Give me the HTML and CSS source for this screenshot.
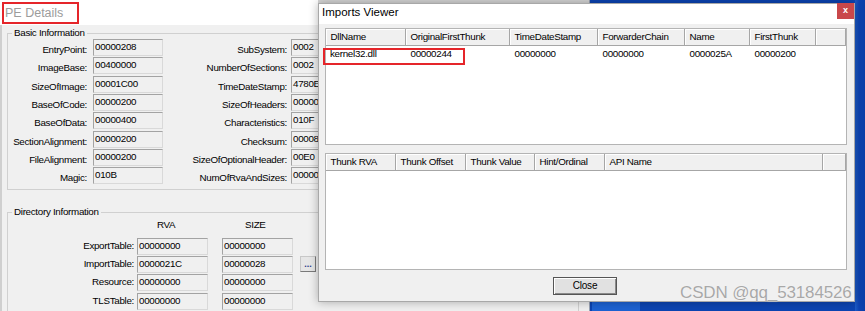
FILE: index.html
```html
<!DOCTYPE html>
<html>
<head>
<meta charset="utf-8">
<title>PE Details - Imports Viewer</title>
<link rel="stylesheet" href="styles.css">
</head>
<body>
<div class="desktop">
  <div class="pe-win">
    <div class="pe-title">PE Details</div>
    <div class="hl hl-title"></div>
    <div class="pe-body">
      <fieldset class="group basic">
        <legend>Basic Information</legend>
        <div class="kv">
          <div class="lbl">EntryPoint:</div><div class="box">00000208</div>
          <div class="lbl lbl2">SubSystem:</div><div class="box">0002</div>
          <div class="lbl">ImageBase:</div><div class="box">00400000</div>
          <div class="lbl lbl2">NumberOfSections:</div><div class="box">0002</div>
          <div class="lbl">SizeOfImage:</div><div class="box">00001C00</div>
          <div class="lbl lbl2">TimeDateStamp:</div><div class="box">4780E2C1</div>
          <div class="lbl">BaseOfCode:</div><div class="box">00000200</div>
          <div class="lbl lbl2">SizeOfHeaders:</div><div class="box">00000400</div>
          <div class="lbl">BaseOfData:</div><div class="box">00000400</div>
          <div class="lbl lbl2">Characteristics:</div><div class="box">010F</div>
          <div class="lbl">SectionAlignment:</div><div class="box">00000200</div>
          <div class="lbl lbl2">Checksum:</div><div class="box">00008A1E</div>
          <div class="lbl">FileAlignment:</div><div class="box">00000200</div>
          <div class="lbl lbl2">SizeOfOptionalHeader:</div><div class="box">00E0</div>
          <div class="lbl">Magic:</div><div class="box">010B</div>
          <div class="lbl lbl2">NumOfRvaAndSizes:</div><div class="box">00000010</div>
        </div>
      </fieldset>
      <fieldset class="group dir">
        <legend>Directory Information</legend>
        <div class="dirgrid">
          <div></div><div class="dhead">RVA</div><div class="dhead dhead2">SIZE</div><div></div>
          <div class="lbl dlbl">ExportTable:</div><div class="box dbox">00000000</div><div class="box dbox">00000000</div><div></div>
          <div class="lbl dlbl">ImportTable:</div><div class="box dbox">0000021C</div><div class="box dbox">00000028</div><div class="dots">...</div>
          <div class="lbl dlbl">Resource:</div><div class="box dbox">00000000</div><div class="box dbox">00000000</div><div></div>
          <div class="lbl dlbl">TLSTable:</div><div class="box dbox">00000000</div><div class="box dbox">00000000</div><div></div>
          <div></div><div class="box dbox"></div><div class="box dbox"></div><div></div>
        </div>
      </fieldset>
    </div>
  </div>

  <div class="imp-win">
    <div class="imp-title">
      <span class="imp-title-text">Imports Viewer</span>
      <span class="imp-close">x</span>
    </div>
    <div class="imp-body">
      <div class="lv lv-dll">
        <div class="lv-head cols-dll">
          <div class="hc">DllName</div>
          <div class="hc">OriginalFirstThunk</div>
          <div class="hc">TimeDateStamp</div>
          <div class="hc">ForwarderChain</div>
          <div class="hc">Name</div>
          <div class="hc">FirstThunk</div>
          <div class="hc"></div>
        </div>
        <div class="lv-row cols-dll">
          <div class="rc">kernel32.dll</div>
          <div class="rc">00000244</div>
          <div class="rc">00000000</div>
          <div class="rc">00000000</div>
          <div class="rc">0000025A</div>
          <div class="rc">00000200</div>
          <div class="rc"></div>
        </div>
        <div class="hl hl-row"></div>
      </div>
      <div class="lv lv-thunk">
        <div class="lv-head cols-thunk">
          <div class="hc">Thunk RVA</div>
          <div class="hc">Thunk Offset</div>
          <div class="hc">Thunk Value</div>
          <div class="hc">Hint/Ordinal</div>
          <div class="hc">API Name</div>
          <div class="hc"></div>
        </div>
      </div>
      <div class="btn-row">
        <div class="btn-close">Close</div>
      </div>
    </div>
  </div>

  <div class="watermark">CSDN @qq_53184526</div>
</div>
</body>
</html>
```

FILE: styles.css
```css
* {
  box-sizing: border-box;
}

html, body {
  margin: 0;
  padding: 0;
}

body {
  width: 865px;
  height: 311px;
  overflow: hidden;
  font-family: "Liberation Sans", Arial, sans-serif;
  color: #000;
}

.desktop {
  position: relative;
  width: 865px;
  height: 311px;
  overflow: hidden;
  background:
    linear-gradient(#1d62d2, #1d62d2) 592px 302px / 48px 9px no-repeat,
    linear-gradient(90deg, #1d5cc8 0, #0d43b2 4px, #0a3ea8 100%) 855px 0 / 10px 311px no-repeat,
    #0c44b2;
}

/* ---------- PE Details window ---------- */
.pe-win {
  position: absolute;
  left: 0;
  top: 0;
  width: 590px;
  height: 311px;
  background: #f0f0f0;
  border-right: 1px solid #9aa3b5;
}

.pe-title {
  height: 25px;
  background: linear-gradient(#d6d6d6, #d6d6d6) 318px 0 / 272px 3px no-repeat, #fff;
  display: flex;
  align-items: center;
  padding-left: 5px;
  font-size: 12.5px;
  color: #9c9c9c;
}

.pe-body {
  height: 286px;
  padding: 2px 0 0 7px;
  box-shadow: inset 2px 0 0 #cfcfcf;
}

.hl {
  position: absolute;
  border: 2px solid #e5252a;
}

.hl-title {
  left: 2px;
  top: 2px;
  width: 77px;
  height: 22px;
}

.group {
  margin: 0;
  padding: 0 0 5px 0;
  border: 1px solid #d0d0d0;
  width: 572px;
  min-width: 0;
}

.group legend {
  margin-left: 4px;
  padding: 0 2px;
  font-size: 9.8px;
  letter-spacing: -0.3px;
  line-height: 12px;
}

.dir {
  margin-top: 16px;
}

.kv {
  display: grid;
  grid-template-columns: 85px 70px 128px 70px;
  grid-auto-rows: 17px;
  row-gap: 1.33px;
}

.lbl {
  text-align: right;
  padding-right: 6px;
  font-size: 9.8px;
  letter-spacing: -0.3px;
  line-height: 21px;
  white-space: nowrap;
}

.lbl2 {
  padding-right: 4px;
}

.box {
  height: 17px;
  border: 1px solid;
  border-color: #a3a3a3 #d9d9d9 #d9d9d9 #a3a3a3;
  background: #f0f0f0;
  padding: 0 1px;
  font-size: 9.8px;
  letter-spacing: -0.3px;
  line-height: 13px;
  white-space: nowrap;
  overflow: hidden;
}

.dirgrid {
  display: grid;
  grid-template-columns: 129px 85px 78px 16px;
  grid-template-rows: 18px;
  grid-auto-rows: 17px;
  row-gap: 1.33px;
}

.dhead {
  font-size: 9.8px;
  letter-spacing: -0.3px;
  line-height: 14px;
  padding-left: 20px;
}

.dhead2 {
  padding-left: 23px;
}

.dlbl {
  padding-right: 3px;
  line-height: 16px;
}

.dbox {
  width: 71px;
}

.dots {
  width: 16px;
  height: 16px;
  margin-top: 0.5px;
  border: 1px solid;
  border-color: #c8c8c8 #7a7a7a #7a7a7a #c8c8c8;
  background: #e6e6e6;
  font-size: 9px;
  font-weight: bold;
  line-height: 14px;
  text-align: center;
  color: #2a3a8a;
  letter-spacing: 0;
}

/* ---------- Imports Viewer window ---------- */
.imp-win {
  position: absolute;
  left: 318px;
  top: 3px;
  width: 537px;
  height: 299px;
  border: 1px solid #a8a8a8;
  background: #f0f0f0;
  box-shadow: 0 0 9px rgba(0, 0, 0, 0.3);
  display: flex;
  flex-direction: column;
}

.imp-title {
  height: 20px;
  background: #fff;
  display: flex;
  justify-content: space-between;
  align-items: flex-start;
}

.imp-title-text {
  padding-left: 3px;
  font-size: 11.5px;
  line-height: 17px;
}

.imp-close {
  width: 17px;
  height: 16px;
  margin-top: -1px;
  background: #c9474a;
  color: #fff;
  font-size: 9px;
  font-weight: bold;
  line-height: 15px;
  text-align: center;
}

.imp-body {
  flex: 1;
  padding: 4px 7px 0 6px;
  display: flex;
  flex-direction: column;
}

.lv {
  position: relative;
  height: 117px;
  background: #fff;
  border: 1px solid #b4b4b4;
}

.lv-thunk {
  margin-top: 8px;
}

.lv-head,
.lv-row {
  display: grid;
}

.cols-dll {
  grid-template-columns: 80px 104px 88px 87px 65px 66px 30px;
}

.cols-thunk {
  grid-template-columns: 70px 70px 69px 70px 218px 23px;
}

.hc {
  height: 17px;
  background: #f0f0f0;
  border-right: 1px solid #a6a6a6;
  border-bottom: 1px solid #a6a6a6;
  box-shadow: inset 1px 1px 0 #fff;
  padding-left: 4.5px;
  font-size: 9.8px;
  letter-spacing: -0.3px;
  line-height: 16px;
  white-space: nowrap;
  overflow: hidden;
}

.rc {
  height: 17px;
  padding-left: 4.5px;
  font-size: 9.8px;
  letter-spacing: -0.3px;
  line-height: 15px;
  white-space: nowrap;
}

.lv-row .rc:first-child {
  padding-left: 4px;
}

.hl-row {
  left: -3px;
  top: 19px;
  width: 142px;
  height: 17px;
}

.btn-row {
  margin-top: 7px;
  display: flex;
  justify-content: center;
}

.btn-close {
  width: 64px;
  height: 18px;
  margin-left: -2px;
  border: 1px solid #555;
  background: #e1e1e1;
  box-shadow: inset 1px 1px 0 #fff, inset -1px -1px 0 #8a8a8a;
  font-size: 10px;
  letter-spacing: -0.2px;
  line-height: 16px;
  text-align: center;
}

.watermark {
  position: absolute;
  left: 680px;
  top: 283px;
  font-size: 17px;
  line-height: 20px;
  letter-spacing: -0.15px;
  color: #a8a8a8;
  text-shadow: 0 0 1px #fff;
  white-space: nowrap;
}
```
